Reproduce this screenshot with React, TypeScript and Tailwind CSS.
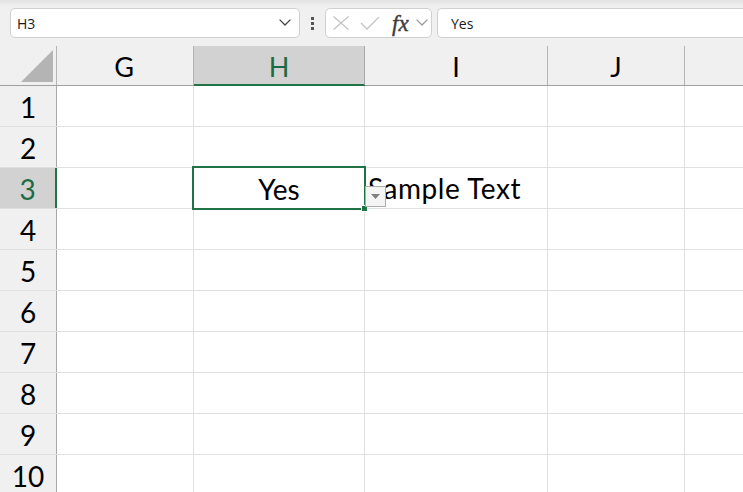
import React from "react";

const cols = ["G", "H", "I", "J", ""];
const widths = ["w-[137px]", "w-[171px]", "w-[183px]", "w-[137px]", "flex-1"];
const rows = [1, 2, 3, 4, 5, 6, 7, 8, 9, 10];

function Chevron({ color, w }: { color: string; w: number }) {
  return (
    <svg width={w} height={w * 0.6} viewBox="0 0 10 6" fill="none" stroke={color} strokeWidth="1.1">
      <path d="M0.5 0.5 L5 5 L9.5 0.5" />
    </svg>
  );
}

function Toolbar() {
  return (
    <div className="h-[46px] shrink-0 bg-[#f0f0f0] bg-gradient-to-b from-[#e2e2e2] to-[#f0f0f0] to-[14%] flex items-start pt-[8px] pl-[10px]">
      <div className="w-[290px] h-[30px] bg-white border border-[#d0d0d0] rounded-[5px] flex items-center justify-between pl-[6px] pr-[8px] text-[14px] text-[#1a1a1a] [font-family:'Open_Sans',sans-serif]">
        <span>H3</span>
        <Chevron color="#444444" w={12} />
      </div>
      <div className="w-[25px] h-[30px] flex flex-col items-center justify-center gap-[2px]">
        <span className="w-[3px] h-[3px] bg-[#555555]" />
        <span className="w-[3px] h-[3px] bg-[#555555]" />
        <span className="w-[3px] h-[3px] bg-[#555555]" />
      </div>
      <div className="w-[107px] h-[30px] bg-white border border-[#d0d0d0] rounded-[5px] flex items-center pl-[7px]">
        <svg width="16" height="14" viewBox="0 0 16 14" fill="none" stroke="#c4c4c4" strokeWidth="1.3">
          <path d="M0.5 0.5 L15.5 13.5 M15.5 0.5 L0.5 13.5" />
        </svg>
        <svg width="20" height="14" viewBox="0 0 20 14" fill="none" stroke="#c4c4c4" strokeWidth="1.3" className="ml-[11px]">
          <path d="M1 7 L7 13 L19 1" />
        </svg>
        <span className="ml-[12px] w-[19px] text-[23px] leading-none italic text-[#3c3c3c] [-webkit-text-stroke:0.4px_#3c3c3c] [font-family:'Liberation_Serif',serif]">fx</span>
        <span className="ml-[5px]">
          <Chevron color="#9a9a9a" w={12} />
        </span>
      </div>
      <div className="ml-[5px] flex-1 h-[30px] bg-white border border-r-0 border-[#d0d0d0] rounded-l-[5px] flex items-center pl-[13px] text-[14px] text-[#1a1a1a] [font-family:'Open_Sans',sans-serif]">
        Yes
      </div>
    </div>
  );
}

function HeaderRow() {
  return (
    <div className="h-[40px] shrink-0 flex bg-[#f0f0f0] border-b border-[#a0a0a0]">
      <div className="w-[57px] shrink-0 border-r border-[#b4b4b4] flex justify-end items-start pt-[4px] pr-[3px]">
        <svg width="32" height="32" viewBox="0 0 32 32">
          <path d="M32 0 V32 H0 Z" fill="#b4b4b4" />
        </svg>
      </div>
      {cols.map((c, i) => (
        <div
          key={i}
          className={`${widths[i]} ${i < 4 ? "shrink-0 border-r" : ""} flex items-center justify-center pt-[3px] text-[27px] ${
            c === "H"
              ? "bg-[#d2d2d2] text-[#1d6b45] border-[#a8a8a8] shadow-[0_1px_0_#217346,inset_0_-1px_0_#217346]"
              : c === "G"
                ? "text-black border-[#b4b4b4] pr-[2px]"
                : "text-black border-[#b4b4b4]"
          }`}
        >
          {c}
        </div>
      ))}
    </div>
  );
}

function Row({ n }: { n: number }) {
  const active = n === 3;
  return (
    <div className="h-[41px] shrink-0 flex border-b border-[#e0e0e0]">
      <div
        className={`w-[57px] shrink-0 flex items-center justify-center pt-[1px] text-[28px] ${
          active
            ? "bg-[#d2d2d2] text-[#1d6b45] border-r-2 border-[#217346]"
            : "bg-[#f0f0f0] text-black border-r border-[#a8a8a8]"
        }`}
      >
        {n}
      </div>
      {cols.map((_, i) => (
        <div
          key={i}
          className={`${widths[i]} ${i < 4 ? "shrink-0 border-r border-[#e0e0e0]" : ""} relative flex items-center text-[28px] text-black`}
        >
          {active && i === 1 && (
            <div className="absolute left-[-2px] top-[-2px] w-[174px] h-[44px] border-2 border-[#217346] flex items-center justify-center pt-[1px] z-10">
              Yes
              <span className="absolute right-[-3px] bottom-[-3px] w-[5px] h-[5px] bg-[#217346] outline outline-1 outline-white" />
            </div>
          )}
          {active && i === 2 && (
            <>
              <span className="pl-[3px] whitespace-nowrap tracking-[0.55px]">Sample Text</span>
              <div className="absolute left-0 top-[18px] w-[21px] h-[21px] bg-[#f5f5f5] border border-[#ababab] flex items-center justify-center z-20">
                <svg width="9" height="5" viewBox="0 0 9 5">
                  <path d="M0 0 H9 L4.5 5 Z" fill="#808080" />
                </svg>
              </div>
            </>
          )}
        </div>
      ))}
    </div>
  );
}

export default function App() {
  return (
    <div className="w-[743px] h-[492px] overflow-hidden flex flex-col bg-white [font-family:Lato,'Noto_Sans',sans-serif]">
      <Toolbar />
      <HeaderRow />
      {rows.map((n) => (
        <Row key={n} n={n} />
      ))}
    </div>
  );
}
